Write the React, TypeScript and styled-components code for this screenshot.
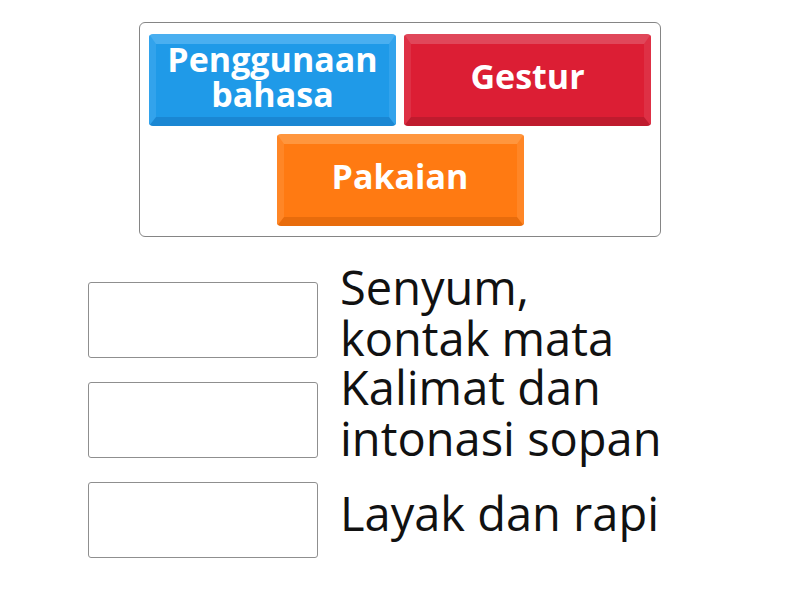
import React from "react";
import styled, { createGlobalStyle } from "styled-components";

const Global = createGlobalStyle`
  html, body { margin: 0; padding: 0; background: #fff; }
  body { font-family: "Open Sans", "Noto Sans", sans-serif; }
`;

const Page = styled.div`
  width: 800px;
  height: 600px;
  display: flex;
  flex-direction: column;
  align-items: center;
  padding-top: 22px;
  box-sizing: border-box;
`;

const Bank = styled.div`
  width: 522px;
  box-sizing: border-box;
  border: 1px solid #858585;
  border-radius: 6px;
  padding: 11px 9px 10px;
  display: flex;
  flex-wrap: wrap;
  justify-content: center;
  gap: 8px;
`;

type TileColors = { main: string; top: string; side: string; bottom: string };

const palettes: Record<string, TileColors> = {
  blue: { main: "#1f9ae8", top: "#4aaff0", side: "#32a3ec", bottom: "#1a87d3" },
  red: { main: "#dc1e34", top: "#e0475a", side: "#de3045", bottom: "#bf1b2e" },
  orange: { main: "#ff7a12", top: "#ff963e", side: "#ff8626", bottom: "#e86c0c" },
};

const Tile = styled.div<{ $c: TileColors }>`
  width: 247px;
  height: 92px;
  box-sizing: border-box;
  border-radius: 4px;
  background: ${(p) => p.$c.main};
  border-style: solid;
  border-width: 10px 7px 9px 7px;
  border-color: ${(p) => p.$c.top} ${(p) => p.$c.side} ${(p) => p.$c.bottom} ${(p) => p.$c.side};
  display: flex;
  align-items: center;
  justify-content: center;
  text-align: center;
  color: #fff;
  font-weight: 700;
  font-size: 34px;
  line-height: 35px;
  overflow: visible;
`;

const TileLabel = styled.span`
  display: block;
  margin-top: -8px;
  white-space: nowrap;
`;

const List = styled.div`
  width: 800px;
  box-sizing: border-box;
  padding-left: 88px;
  margin-top: 45px;
  display: flex;
  flex-direction: column;
  gap: 24px;
`;

const Row = styled.div`
  height: 76px;
  display: flex;
  align-items: center;
  gap: 22px;
`;

const Slot = styled.div`
  width: 230px;
  height: 76px;
  box-sizing: border-box;
  border: 1px solid #8f8f8f;
  border-radius: 3px;
  flex-shrink: 0;
`;

const Phrase = styled.div`
  font-size: 47px;
  line-height: 51px;
  color: #111;
  padding-bottom: 14px;
  white-space: nowrap;
`;

const tiles = [
  { key: "blue", lines: ["Penggunaan", "bahasa"] },
  { key: "red", lines: ["Gestur"] },
  { key: "orange", lines: ["Pakaian"] },
];

const phrases = [
  ["Senyum,", "kontak mata"],
  ["Kalimat dan", "intonasi sopan"],
  ["Layak dan rapi"],
];

export default function App() {
  return (
    <>
      <Global />
      <Page>
        <Bank>
          {tiles.map((t) => (
            <Tile key={t.key} $c={palettes[t.key]}>
              <TileLabel>
                {t.lines.map((l, i) => (
                  <React.Fragment key={i}>
                    {i > 0 && <br />}
                    {l}
                  </React.Fragment>
                ))}
              </TileLabel>
            </Tile>
          ))}
        </Bank>
        <List>
          {phrases.map((p, idx) => (
            <Row key={idx}>
              <Slot />
              <Phrase>
                {p.map((l, i) => (
                  <React.Fragment key={i}>
                    {i > 0 && <br />}
                    {l}
                  </React.Fragment>
                ))}
              </Phrase>
            </Row>
          ))}
        </List>
      </Page>
    </>
  );
}
